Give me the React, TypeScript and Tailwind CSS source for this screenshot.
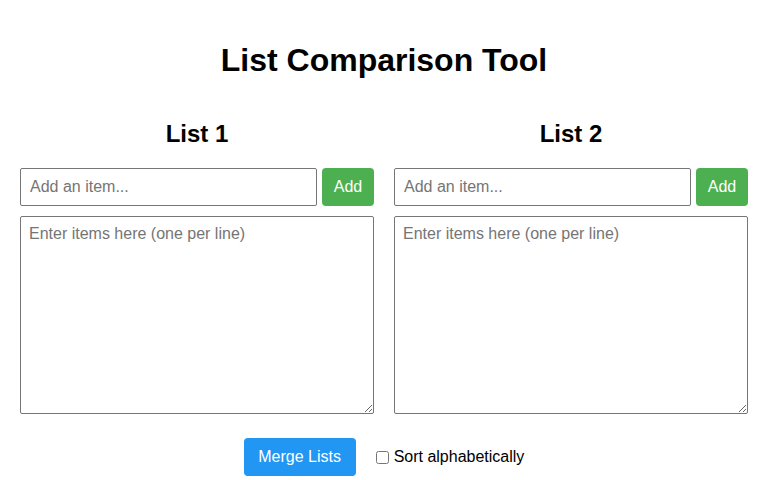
export default function App() {
  return (
    <div className="min-h-screen bg-white p-5 text-black" style={{ fontFamily: '"Liberation Sans", Arial, sans-serif' }}>
      <h1 className="mt-[22px] mb-[21px] text-center text-[32px] font-bold leading-[37px]">List Comparison Tool</h1>

      <div className="flex gap-5">
        {[1, 2].map((n) => (
          <div key={n} className="flex-1">
            <h2 className="mt-5 mb-5 text-center text-2xl font-bold leading-7">List {n}</h2>
            <div className="flex gap-[5px]">
              <input
                type="text"
                placeholder="Add an item..."
                className="h-[38px] min-w-0 flex-1 rounded-[2px] border border-[#767676] px-[9px] text-base placeholder:text-[#757575]"
              />
              <button className="h-[38px] w-[52px] rounded bg-[#4CAF50] text-base text-white">Add</button>
            </div>
            <textarea
              placeholder="Enter items here (one per line)"
              className="mt-[10px] block h-[198px] w-full resize-y rounded-[2px] border border-[#767676] p-2 text-base leading-[18px] placeholder:text-[#757575]"
            />
          </div>
        ))}
      </div>

      <div className="mt-6 flex items-center justify-center">
        <button className="h-[38px] w-[112px] rounded bg-[#2196F3] text-base text-white">Merge Lists</button>
        <label className="ml-5 flex items-center text-base">
          <input type="checkbox" className="mr-[5px] h-[13px] w-[13px]" />
          Sort alphabetically
        </label>
      </div>
    </div>
  );
}
